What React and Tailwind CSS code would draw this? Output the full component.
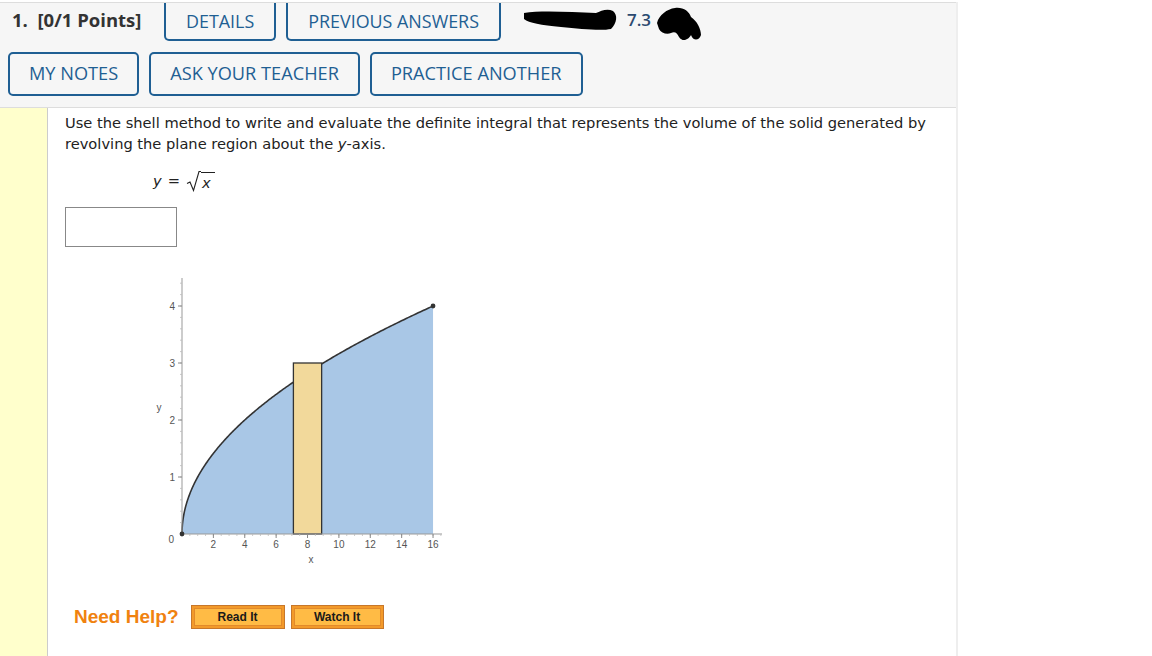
import React from "react";

const SX = 15.69;
const SY = 57;
const X0 = 42;
const Y0 = 263;
const px = (x) => X0 + SX * x;
const py = (y) => Y0 - SY * y;

function Chart() {
  const pts = [];
  for (let i = 0; i <= 200; i++) {
    const x = (16 * i * i) / 40000;
    pts.push(`${px(x).toFixed(2)},${py(Math.sqrt(x)).toFixed(2)}`);
  }
  const curve = "M" + pts.join(" L");
  const fill = curve + ` L${px(16)},${Y0} Z`;
  const yMinor = [];
  for (let v = 0; v <= 4.5; v += 0.2) yMinor.push(v);
  const xMinor = [];
  for (let v = 0; v <= 16.5; v += 0.5) xMinor.push(v);
  return (
    <svg width="320" height="300" viewBox="0 0 320 300" className="block">
      <path d={fill} fill="#a9c7e6" />
      <path d={curve} fill="none" stroke="#333" strokeWidth="1.6" />
      <rect x={px(7.1)} y={py(3)} width={px(8.9) - px(7.1)} height={py(0) - py(3)} fill="#f2d99b" stroke="#333" strokeWidth="1.3" />
      <line x1={X0} y1="7" x2={X0} y2={Y0} stroke="#999" strokeWidth="1" />
      <line x1={X0} y1={Y0} x2="302" y2={Y0} stroke="#999" strokeWidth="1" />
      {yMinor.map((v, i) => (
        <line key={"ym" + i} x1={X0 - 2} y1={py(v)} x2={X0} y2={py(v)} stroke="#bbb" strokeWidth="0.8" />
      ))}
      {[1, 2, 3, 4].map((v) => (
        <line key={"yt" + v} x1={X0 - 4} y1={py(v)} x2={X0} y2={py(v)} stroke="#888" strokeWidth="1" />
      ))}
      {xMinor.map((v, i) => (
        <line key={"xm" + i} x1={px(v)} y1={Y0} x2={px(v)} y2={Y0 + 2} stroke="#bbb" strokeWidth="0.8" />
      ))}
      {[2, 4, 6, 8, 10, 12, 14, 16].map((v) => (
        <line key={"xt" + v} x1={px(v)} y1={Y0} x2={px(v)} y2={Y0 + 4} stroke="#888" strokeWidth="1" />
      ))}
      <circle cx={X0} cy={Y0} r="2.4" fill="#333" />
      <circle cx={px(16)} cy={py(4)} r="2.4" fill="#333" />
      <g fontFamily="'Liberation Sans', Arial, sans-serif" fontSize="10" fill="#555">
        {[1, 2, 3, 4].map((v) => (
          <text key={"yl" + v} x={X0 - 7} y={py(v) + 3.5} textAnchor="end">{v}</text>
        ))}
        <text x={X0 - 8} y={Y0 + 9} textAnchor="end">0</text>
        {[2, 4, 6, 8, 10, 12, 14, 16].map((v) => (
          <text key={"xl" + v} x={px(v)} y={Y0 + 14} textAnchor="middle">{v}</text>
        ))}
        <text x="171" y="292" textAnchor="middle">x</text>
        <text x="19" y="140" textAnchor="middle">y</text>
      </g>
    </svg>
  );
}

const topBtn =
  "h-[38px] border-2 border-t-0 border-[#1f5f93] rounded-b-[5px] px-[20px] flex items-center text-[#1f5f93] text-[17.9px] bg-[#f6f6f6]";
const btn =
  "h-[44px] border-2 border-[#1f5f93] rounded-[5px] px-[19px] flex items-center text-[#1f5f93] text-[18.2px] bg-[#f6f6f6]";

function HelpBtn({ children, w }) {
  return (
    <div className={`h-[24px] ${w} bg-[#f39a2a] border border-[#c7772a] p-[2px]`}>
      <div className="h-full w-full bg-[#ffbb45] border border-[#e28a2b] flex items-center justify-center text-[12px] font-bold text-[#1a1a1a]" style={{ fontFamily: "'Liberation Sans', Arial, sans-serif" }}>
        {children}
      </div>
    </div>
  );
}

export default function App() {
  return (
    <div className="w-[1152px] h-[656px] bg-white overflow-hidden pt-[2px]" style={{ fontFamily: "'Open Sans', 'Noto Sans', sans-serif" }}>
      <div className="w-[958px] border-r-2 border-[#eeeeee] h-[654px] flex flex-col">
        <div className="bg-[#f6f6f6] border-t border-b border-[#dddddd] pb-[11px]">
          <div className="flex items-start">
            <div className="pl-[12px] pt-[3px] text-[18.5px] font-bold text-[#333] w-[164px] whitespace-pre">1.  [0/1 Points]</div>
            <div className={topBtn}>DETAILS</div>
            <div className={topBtn + " ml-[10px]"}>PREVIOUS ANSWERS</div>
            <div className="relative ml-[20px] h-[38px] w-[190px]">
              <span className="absolute left-[106px] top-[4px] text-[17px] font-semibold text-[#2c4a70]">7.3</span>
              <svg className="absolute left-0 top-0" width="190" height="42" viewBox="0 0 190 42">
                <path d="M3 10 C20 7 50 9 75 10 C80 8 86 5 92 8 C97 12 96 20 90 26 C80 28 60 26 40 24 C20 22 8 20 3 16 Z" fill="#000" />
                <path d="M82 14 C86 10 92 12 91 20 C88 26 82 24 82 14 Z" fill="#000" />
                <path d="M136 20 C138 12 146 6 154 5 C162 4 168 8 170 14 C176 18 180 26 180 32 C178 38 172 38 170 32 C168 36 162 40 158 34 C156 30 154 28 150 30 C146 32 140 30 138 26 Z" fill="#000" />
              </svg>
            </div>
          </div>
          <div className="flex gap-[10px] mt-[11px] pl-[8px]">
            <div className={btn}>MY NOTES</div>
            <div className={btn}>ASK YOUR TEACHER</div>
            <div className={btn}>PRACTICE ANOTHER</div>
          </div>
        </div>
        <div className="flex flex-1">
          <div className="w-[48px] bg-[#ffffcc] border-r border-[#cccccc] shrink-0" />
          <div className="pl-[17px] pt-[4px] text-[#222]" style={{ fontFamily: "'DejaVu Sans', Verdana, sans-serif" }}>
            <p className="text-[14.65px] leading-[21px] w-[885px]">
              Use the shell method to write and evaluate the definite integral that represents the volume of the solid generated by revolving the plane region about the <i>y</i>-axis.
            </p>
            <div className="mt-[14px] ml-[88px] text-[14.65px] flex items-end h-[24px]">
              <i>y</i>
              <span className="mx-[6px]">=</span>
              <span className="flex items-end">
                <svg width="15" height="22" viewBox="0 0 15 22">
                  <path d="M1 13.5 L4 12 L7.5 20.5 L13 1.5 L15 1.5" fill="none" stroke="#222" strokeWidth="1.1" />
                </svg>
                <i className="border-t border-[#222] pl-[1px] pr-[4px] leading-[19px]">x</i>
              </span>
            </div>
            <div className="mt-[15px] w-[112px] h-[40px] border border-[#888] bg-white" />
            <div className="mt-[24px] ml-[75px]">
              <Chart />
            </div>
            <div className="mt-[32px] ml-[9px] flex items-center gap-[12px]">
              <span className="text-[19px] font-bold text-[#f0820f]" style={{ fontFamily: "'Liberation Sans', Arial, sans-serif" }}>Need Help?</span>
              <HelpBtn w="w-[94px]">Read It</HelpBtn>
              <div className="-ml-[6px]"><HelpBtn w="w-[93px]">Watch It</HelpBtn></div>
            </div>
          </div>
        </div>
      </div>
    </div>
  );
}
